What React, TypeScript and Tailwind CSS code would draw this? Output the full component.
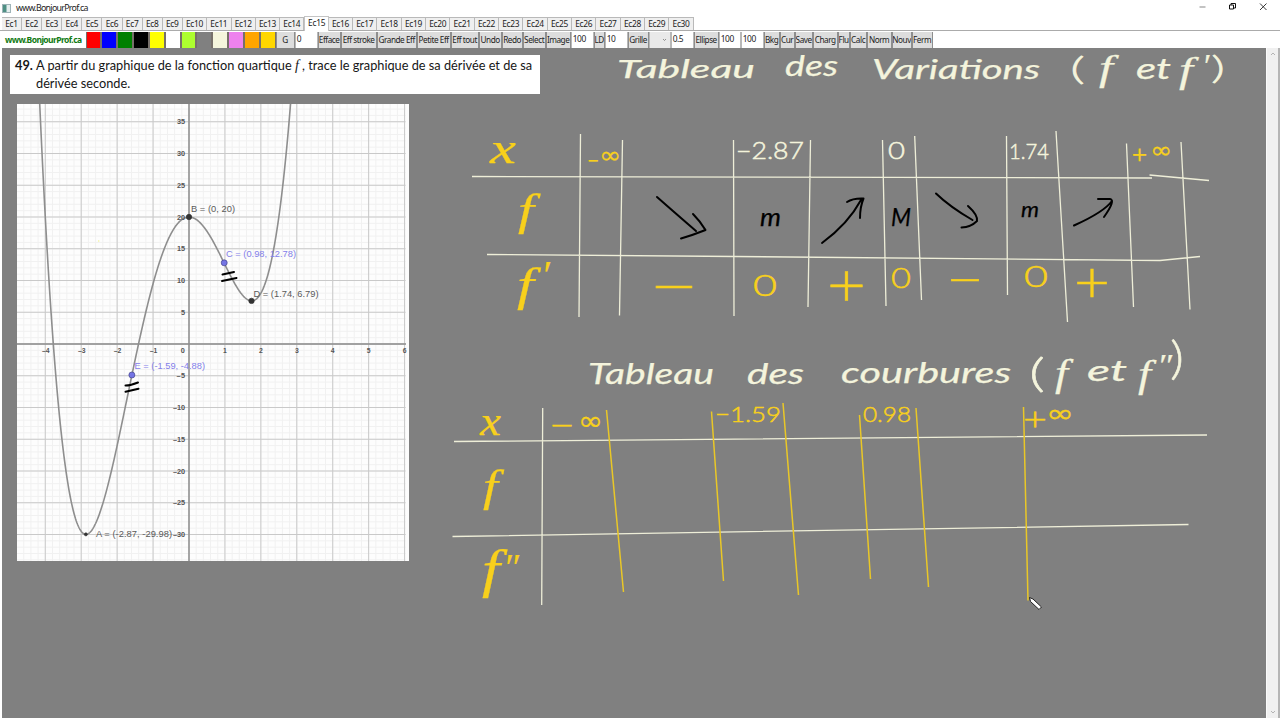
import React from "react";

const YELLOW = "#f8d01c";
const IVORY = "#f4f4dc";

const swatches = [
  "bg-[#ff0000]", "bg-[#0000ff]", "bg-[#008000]", "bg-black", "bg-[#ffff00]", "bg-white",
  "bg-[#adff2f]", "bg-[#808080]", "bg-[#f5f5dc]", "bg-[#ee82ee]", "bg-[#ffa500]", "bg-[#ffd700]",
];

type Tool = { label: string; w: string; kind?: "input" | "select" };
const tools: Tool[] = [
  { label: "G", w: "w-[19px]" },
  { label: "0", w: "w-[23px]", kind: "input" },
  { label: "Efface", w: "w-[23px]" },
  { label: "Eff stroke", w: "w-[36px]" },
  { label: "Grande Eff", w: "w-[40px]" },
  { label: "Petite Eff", w: "w-[34px]" },
  { label: "Eff tout", w: "w-[28px]" },
  { label: "Undo", w: "w-[23px]" },
  { label: "Redo", w: "w-[21px]" },
  { label: "Select", w: "w-[23px]" },
  { label: "Image", w: "w-[25px]" },
  { label: "100", w: "w-[23px]", kind: "input" },
  { label: "LD", w: "w-[11px]" },
  { label: "10", w: "w-[23px]", kind: "input" },
  { label: "Grille", w: "w-[21px]" },
  { label: "", w: "w-[22px]", kind: "select" },
  { label: "0.5", w: "w-[23px]", kind: "input" },
  { label: "Ellipse", w: "w-[25px]" },
  { label: "100", w: "w-[22px]", kind: "input" },
  { label: "100", w: "w-[23px]", kind: "input" },
  { label: "Bkg", w: "w-[16px]" },
  { label: "Cur", w: "w-[15px]" },
  { label: "Save", w: "w-[18px]" },
  { label: "Charg", w: "w-[25px]" },
  { label: "Flu", w: "w-[12px]" },
  { label: "Calc", w: "w-[17px]" },
  { label: "Norm", w: "w-[25px]" },
  { label: "Nouv", w: "w-[20px]" },
  { label: "Ferm", w: "w-[21px]" },
];

function TitleBar() {
  return (
    <header className="flex h-[17px] items-start justify-between">
      <div className="flex items-center gap-[5px] pl-[2px] pt-[2px]">
        <svg width="9" height="9" viewBox="0 0 9 9">
          <rect x="0.5" y="0.5" width="8" height="8" fill="#e4eeee" stroke="#9fb4b8" />
          <rect x="1" y="1" width="3.500" height="7" fill="#4f9084" />
        </svg>
        <span className="text-[8.800px] leading-[12px] tracking-[-0.7px]">www.BonjourProf.ca</span>
      </div>
      <svg width="84" height="14" viewBox="1196 0 84 14" fill="none">
        <path d="M1199.500 7h6" stroke="#aaa" strokeWidth="1.400" />
        <path d="M1229.500 5h4v4h-4zM1231 5v-1.500h4.500v4.500h-1.500" stroke="#111" strokeWidth="1" />
        <path d="M1260 3.500l6.500 6.500M1266.500 3.500l-6.500 6.500" stroke="#222" strokeWidth="0.900" />
      </svg>
    </header>
  );
}

function Tabs() {
  return (
    <nav className="flex h-[14px] items-end border-b border-[#ababab] pl-[2px]">
      {Array.from({ length: 30 }, (_, i) => i + 1).map((n) => {
        const width = n < 10 ? "w-[20.100px]" : "w-[24.340px]";
        const look =
          n === 15
            ? "h-[15px] -mb-px bg-white border-x border-t border-[#c4c4c4] pb-[1px]"
            : "h-[13px] bg-[#efefef] border-r border-t border-[#b9b9b9]";
        return (
          <div key={n} className={`${width} ${look} flex shrink-0 items-center justify-center text-[8.400px] tracking-[-0.3px]`}>
            Ec{n}
          </div>
        );
      })}
    </nav>
  );
}

function ToolBar() {
  return (
    <div className="flex h-[17px] items-stretch pl-[3px] pt-px">
      <div className="flex w-[82.500px] shrink-0 items-center whitespace-nowrap pl-[2px] text-[8.500px] font-bold tracking-[-0.57px] text-[#0f7a12]">
        www.BonjourProf.ca
      </div>
      {swatches.map((c) => (
        <div key={c} className={`${c} w-[15.850px] shrink-0 border-x border-[#77706a]`} />
      ))}
      {tools.map((t, i) => {
        if (t.kind === "input")
          return (
            <div key={i} className={`${t.w} shrink-0 border-x border-[#b8b8b8] bg-white pl-px text-[8.400px] leading-[13px] tracking-[-0.4px]`}>
              {t.label}
            </div>
          );
        if (t.kind === "select")
          return (
            <div key={i} className={`${t.w} flex shrink-0 items-center justify-end border-x border-[#b8b8b8] bg-[#e9e9e9] pr-[3px]`}>
              <svg width="5" height="4" viewBox="0 0 5 4" fill="none">
                <path d="M1 1l1.500 1.500L4 1" stroke="#777" strokeWidth="0.800" />
              </svg>
            </div>
          );
        return (
          <div
            key={i}
            className={`${t.w} flex shrink-0 items-center justify-center overflow-hidden whitespace-nowrap border-x border-[#8e8e8e] bg-[#dddddd] text-[8.200px] tracking-[-0.45px]`}
          >
            {t.label}
          </div>
        );
      })}
    </div>
  );
}

const px = (x: number) => 189 + x * 35.93;
const py = (y: number) => 344 - y * 6.35;
const quartic = (x: number) => x ** 4 + 1.5 * x ** 3 - 10 * x ** 2 + 20;
const curve = Array.from({ length: 361 }, (_, i) => -4.3 + i * 0.02)
  .map((x) => `${px(x).toFixed(2)},${py(quartic(x)).toFixed(2)}`)
  .join(" ");
const range = (a: number, b: number) => Array.from({ length: b - a + 1 }, (_, i) => a + i);

type GraphPoint = { t: string; x: number; y: number; r: number; lx: number; ly: number; w: number; violet?: boolean };
const points: GraphPoint[] = [
  { t: "A = (-2.87, -29.98)", x: -2.87, y: -29.98, r: 1.5, lx: 96, ly: 537, w: 76 },
  { t: "B = (0, 20)", x: 0, y: 20, r: 2.7, lx: 191, ly: 212.3, w: 44 },
  { t: "C = (0.98, 12.78)", x: 0.98, y: 12.78, r: 3, lx: 226, ly: 257, w: 70, violet: true },
  { t: "D = (1.74, 6.79)", x: 1.74, y: 6.79, r: 2.7, lx: 253.5, ly: 296.5, w: 65 },
  { t: "E = (-1.59, -4.88)", x: -1.59, y: -4.88, r: 3, lx: 134.5, ly: 369.3, w: 70.5, violet: true },
];

function Graph() {
  return (
    <svg className="mt-[10px] ml-[15px] block bg-[#fdfdfd]" width="392" height="457" viewBox="17 104 392 457">
      <g stroke="#f1f1f1" strokeWidth="1">
        {range(-23, 30).map((i) => <line key={i} x1={px(i / 5)} x2={px(i / 5)} y1="104" y2="561" />)}
        {range(-34, 37).map((i) => <line key={i} x1="17" x2="405.500" y1={py(i)} y2={py(i)} />)}
      </g>
      <g stroke="#c9c9c9" strokeWidth="1">
        {range(-4, 6).map((i) => <line key={i} x1={px(i)} x2={px(i)} y1="104" y2="561" />)}
        {range(-6, 7).map((i) => <line key={i} x1="17" x2="405.500" y1={py(i * 5)} y2={py(i * 5)} />)}
      </g>
      <g stroke="#8c8c8c" strokeWidth="1.400">
        <line x1="189" x2="189" y1="104" y2="561" />
        <line x1="17" x2="406" y1="344" y2="344" />
      </g>
      <polyline points={curve} fill="none" stroke="#8e8e8e" strokeWidth="1.600" />
      <g className="font-['Liberation_Sans',sans-serif]" fontSize="7.300" fontWeight="700" fill="#555">
        {range(-4, 6).filter((i) => i !== 0).map((i) => (
          <text key={i} x={px(i) + (i < 0 ? 0.5 : 0)} y="353.300" textAnchor="middle" fontSize="6.800">{i < 0 ? `–${-i}` : i}</text>
        ))}
        <text x="182.800" y="353.300" textAnchor="middle">0</text>
        {range(-6, 7).filter((i) => i !== 0).map((i) => (
          <text key={i} x="185" y={py(i * 5) + 2.5} textAnchor="end" textLength={i === -1 ? 8.5 : i < 0 ? 12 : i === 1 ? 4 : 8}>{i < 0 ? `–${-i * 5}` : i * 5}</text>
        ))}
      </g>
      {points.map((p) => (
        <g key={p.t}>
          <circle cx={px(p.x)} cy={py(p.y)} r={p.r} fill={p.violet ? "#7474e4" : "#333"} stroke={p.violet ? "#44448c" : "#333"} strokeWidth="0.700" />
          <text className="font-['Liberation_Sans',sans-serif]" x={p.lx} y={p.ly} textLength={p.w} fontSize="9.300" fill={p.violet ? "#8480ea" : "#5a5a5a"}>
            {p.t}
          </text>
        </g>
      ))}
    </svg>
  );
}

type Hand = "math" | "light" | "sign";
type Note = { t: string; x: number; y: number; s: number; w?: number; c?: string; f?: Hand };
const hands: Record<Hand, string> = {
  math: "font-['Liberation_Serif',serif] italic",
  light: "font-['Lato',sans-serif] font-light",
  sign: "font-['DejaVu_Sans',sans-serif]",
};
const notes: Note[] = [
  { t: "Tableau", x: 617, y: 78, s: 26, w: 138 },
  { t: "des", x: 785, y: 76, s: 28, w: 53 },
  { t: "Variations", x: 872, y: 79, s: 27, w: 168 },
  { t: "(", x: 1070, y: 80, s: 31, w: 15, f: "light" },
  { t: "f", x: 1099, y: 80, s: 35, w: 14, f: "math" },
  { t: "et", x: 1136, y: 79, s: 28, w: 35 },
  { t: "f", x: 1179, y: 82, s: 36, w: 14, f: "math" },
  { t: "′", x: 1202, y: 77, s: 33, f: "math" },
  { t: ")", x: 1211, y: 79, s: 31, w: 14, f: "light" },
  { t: "Tableau", x: 588, y: 384, s: 28, w: 126 },
  { t: "des", x: 747, y: 384, s: 28, w: 57 },
  { t: "courbures", x: 841, y: 383, s: 28, w: 170 },
  { t: "(", x: 1029, y: 387, s: 40, w: 16, f: "light" },
  { t: "f", x: 1055, y: 386, s: 37, w: 13, f: "math" },
  { t: "et", x: 1087, y: 381, s: 28, w: 40 },
  { t: "f", x: 1138, y: 387, s: 37, w: 13, f: "math" },
  { t: "″", x: 1157, y: 376, s: 32, w: 15, f: "math" },
  { t: ")", x: 1170, y: 374, s: 46, w: 14, f: "light" },

  { t: "x", x: 490, y: 163, s: 44, w: 26, c: YELLOW, f: "math" },
  { t: "−", x: 587, y: 166, s: 16, w: 12, c: YELLOW, f: "sign" },
  { t: "∞", x: 599, y: 163, s: 23, w: 22, c: YELLOW, f: "sign" },
  { t: "−2.87", x: 736, y: 159, s: 23, w: 68, f: "light" },
  { t: "0", x: 888, y: 159, s: 23, w: 17, f: "light" },
  { t: "1.74", x: 1009, y: 159, s: 22, w: 40, f: "light" },
  { t: "+", x: 1131, y: 161, s: 19, w: 17, c: YELLOW, f: "sign" },
  { t: "∞", x: 1150, y: 158, s: 23, w: 22, c: YELLOW, f: "sign" },
  { t: "f", x: 518, y: 225, s: 45, w: 16, c: YELLOW, f: "math" },
  { t: "f", x: 517, y: 300, s: 47, w: 17, c: YELLOW, f: "math" },
  { t: "′", x: 541, y: 288, s: 40, c: YELLOW, f: "math" },
  { t: "m", x: 760, y: 226, s: 25, w: 21, c: "#000" },
  { t: "M", x: 891, y: 226, s: 25, w: 20, c: "#000" },
  { t: "m", x: 1021, y: 217, s: 22, w: 18, c: "#000" },
  { t: "−", x: 649, y: 306, s: 58, w: 50, c: YELLOW, f: "light" },
  { t: "0", x: 753, y: 296, s: 29, w: 24, c: YELLOW, f: "light" },
  { t: "+", x: 827, y: 306, s: 60, w: 39, c: YELLOW, f: "light" },
  { t: "0", x: 891, y: 288, s: 28, w: 20, c: YELLOW, f: "light" },
  { t: "−", x: 946, y: 297, s: 49, w: 38, c: YELLOW, f: "light" },
  { t: "0", x: 1024, y: 287, s: 29, w: 24, c: YELLOW, f: "light" },
  { t: "+", x: 1074, y: 302, s: 57, w: 36, c: YELLOW, f: "light" },

  { t: "x", x: 480, y: 435, s: 40, w: 21, c: YELLOW, f: "math" },
  { t: "−", x: 549, y: 436, s: 32, w: 26, c: YELLOW, f: "light" },
  { t: "∞", x: 578, y: 430, s: 27, w: 25, c: YELLOW, f: "sign" },
  { t: "−1.59", x: 715, y: 422, s: 22, w: 66, c: YELLOW, f: "light" },
  { t: "0.98", x: 863, y: 422, s: 22, w: 48, c: YELLOW, f: "light" },
  { t: "+", x: 1023, y: 430, s: 32, w: 24, c: YELLOW, f: "light" },
  { t: "∞", x: 1046, y: 422, s: 25, w: 28, c: YELLOW, f: "sign" },
  { t: "f", x: 483, y: 501, s: 45, w: 15, c: YELLOW, f: "math" },
  { t: "f", x: 482, y: 587, s: 53, w: 18, c: YELLOW, f: "math" },
  { t: "″", x: 503, y: 580, s: 38, c: YELLOW, f: "math" },
];

const ivoryLines = [
  "M472 176.500L1152 178M1149.500 175L1209 180.500", "M487 254.500L735 256.500L1160 260.500L1200 256.500",
  "M580.500 134L579 317", "M622.500 140L619.500 315.500", "M733.500 140L734 316", "M810.500 140L808 307",
  "M882.500 140L886 306", "M914.700 136L921.500 300", "M1006.500 136L1007.500 295", "M1056 131L1067.500 322",
  "M1126.500 143.500L1133.500 307", "M1181 142L1190 309.500",
  "M454 441.500L1207 435", "M452.500 536.500L1188.500 524.500", "M542.700 408L541.700 605",
];
const yellowLines = [
  "M606.500 410L623.500 592", "M711.500 411.500L723.500 581", "M783 403L798.500 595",
  "M859.500 415L870.500 579", "M916 408L928.500 587", "M1023.500 407L1028 600.500",
];

function Ink() {
  return (
    <svg className="absolute inset-0" width="1264" height="670" viewBox="2 48 1264 670" fill="none">
      <path d={ivoryLines.join("")} stroke="#eeeed8" strokeWidth="1.300" />
      <path d={yellowLines.join("")} stroke="#e9c727" strokeWidth="1.500" />
      <g stroke="#000" strokeWidth="2" strokeLinecap="round" strokeLinejoin="round">
        <path d="M657 197Q674 212 696 231M693 214Q700 221 705.500 230Q693 235 681 238.500" />
        <path d="M822 243Q848 224 861 200M847 202Q853 198 863.500 198.500Q860 207 860 218" />
        <path d="M936 193.500Q950 207 972.500 220M968 206Q978 215 977 221Q971 227 961.500 227.500" />
        <path d="M1074 225.500Q1104 212 1112 201M1098 199H1110Q1116 200 1104 217" />
        <path d="M222.500 274.500L234 272M222 281L236.500 278M125.500 385.500Q131 385.500 138 382.500M125.500 391.800L138.500 388.700" />
      </g>
      {notes.map((n, i) => (
        <text
          key={i}
          x={n.x}
          y={n.y}
          fontSize={n.s}
          fill={n.c ?? IVORY}
          stroke={n.c ?? IVORY}
          strokeWidth={n.f === "light" ? 0.5 : 0.25}
          textLength={n.w}
          lengthAdjust="spacingAndGlyphs"
          className={n.f ? hands[n.f] : "font-['Lato',sans-serif] italic"}
        >
          {n.t}
        </text>
      ))}
      <circle cx="98.700" cy="241" r="0.800" fill="#f4f49a" />
      <path d="M1029.500 597.500L1033 599L1041.500 607L1039 609.500L1030.500 601.500Z" fill="#fff" stroke="#222" strokeWidth="1" />
    </svg>
  );
}

export default function App() {
  return (
    <div className="flex h-[720px] w-[1280px] flex-col overflow-hidden bg-white font-['Noto_Sans','Open_Sans',sans-serif] text-[#222]">
      <TitleBar />
      <Tabs />
      <ToolBar />
      <div className="flex h-[670px] border-r-2 border-[#b5b5b5] pl-[2px]">
        <main className="relative w-[1264px] shrink-0 overflow-hidden bg-[#808080]">
          <section className="mt-[7px] ml-[8px] flex h-[39px] w-[530px] gap-[4px] bg-white pl-[5px] pt-[1px] font-['Lato',sans-serif] text-[12.750px] leading-[18px] text-[#161616]">
            <b className="w-[17px]">49.</b>
            <p className="whitespace-nowrap">
              A partir du graphique de la fonction quartique{" "}
              <i className="font-['Liberation_Serif',serif] text-[14px] leading-none">f</i> , trace le graphique de sa dérivée et de sa
              <br />
              dérivée seconde.
            </p>
          </section>
          <Graph />
          <Ink />
        </main>
        <aside className="flex flex-1 flex-col items-center justify-between border-l border-[#fafafa] bg-[#f0f0f0] py-[3px]">
          <svg width="6" height="5" viewBox="0 0 6 5" fill="none"><path d="M1 4l2-2 2 2" stroke="#b4b4b4" /></svg>
          <svg width="6" height="5" viewBox="0 0 6 5" fill="none"><path d="M1 1l2 2 2-2" stroke="#b4b4b4" /></svg>
        </aside>
      </div>
    </div>
  );
}
